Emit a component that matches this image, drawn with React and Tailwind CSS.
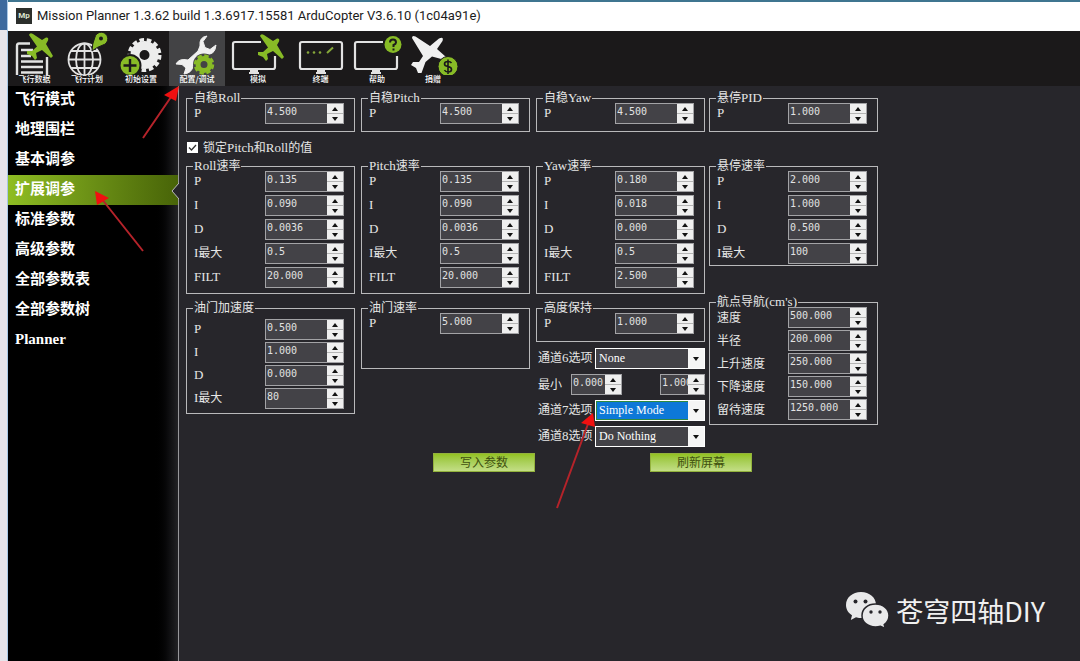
import { useId, useState } from "react";

const green = "#88bb26";

/* Sets Latin runs in a serif face beside the CJK glyphs. */
function Mixed({ children }) {
  return children.split(/([A-Za-z0-9()']+)/).map((part, i) =>
    i % 2 ? (
      <span key={i} className="font-['Liberation_Serif',serif] text-[13px]">{part}</span>
    ) : (
      part
    )
  );
}

function Spinner({ id, label, value, className }) {
  const [text, setText] = useState(value);
  const digits = (value.split(".")[1] || "").length;
  const step = (dir) => setText((t) => (Number(t) + dir / 10 ** digits).toFixed(digits));
  return (
    <div className={`flex h-[21px] shrink-0 border border-[#a3a3a6] bg-[#434247] ${className}`}>
      <input
        id={id}
        aria-label={label}
        type="text"
        inputMode="decimal"
        value={text}
        onChange={(e) => setText(e.target.value)}
        className="min-w-0 flex-1 bg-transparent pb-[3px] pl-px font-['DejaVu_Sans_Mono',monospace] text-[10px] leading-4 text-[#e2e2e2] outline-none"
      />
      <div className="flex w-4 shrink-0 flex-col gap-px bg-[#b4b4b4]">
        <button type="button" aria-label="+" onClick={() => step(1)} className="flex flex-1 items-center justify-center bg-[#efefef]">
          <svg width="6" height="4" viewBox="0 0 6 4"><path d="M3 0L6 4H0z" fill="#111" /></svg>
        </button>
        <button type="button" aria-label="-" onClick={() => step(-1)} className="flex flex-1 items-center justify-center bg-[#efefef]">
          <svg width="6" height="4" viewBox="0 0 6 4"><path d="M3 4L6 0H0z" fill="#111" /></svg>
        </button>
      </div>
    </div>
  );
}

function Field({ label, value }) {
  const id = useId();
  return (
    <div className="flex h-[21px] items-center">
      <label htmlFor={id} className="w-[72px] shrink-0 pb-0.5 pl-px leading-[14px]"><Mixed>{label}</Mixed></label>
      <Spinner id={id} value={value} className="w-[79px]" />
    </div>
  );
}

function Group({ title, rows, className = "", gap = "gap-[3px]" }) {
  return (
    <fieldset className={`border border-[#b9b9bb] pl-1.5 ${className}`}>
      <legend className="h-[9px] px-px leading-[5px] whitespace-nowrap"><Mixed>{title}</Mixed></legend>
      <div className={`flex flex-col ${gap}`}>
        {rows.map(([label, value]) => <Field key={label} label={label} value={value} />)}
      </div>
    </fieldset>
  );
}

function Choice({ label, options, active }) {
  const id = useId();
  return (
    <div className="flex items-center pl-0.5">
      <label htmlFor={id} className="w-[57px] shrink-0 pb-0.5 whitespace-nowrap"><Mixed>{label}</Mixed></label>
      <div className="flex h-[21px] w-[111px] border border-white bg-white">
        <div className={`relative flex w-full border ${active ? "border-[#2f8a3f]" : "border-[#434247]"}`}>
          <select
            id={id}
            className={`w-full appearance-none pb-0.5 pl-0.5 font-['Liberation_Serif',serif] text-[12px] leading-4 text-white outline-none ${active ? "bg-[#0d78d8]" : "bg-[#434247]"}`}
          >
            {options.map((o) => <option key={o}>{o}</option>)}
          </select>
          <span className="pointer-events-none absolute -inset-y-px -right-px flex w-4 items-center justify-center bg-[#f5f5f5]">
            <svg width="6" height="4" viewBox="0 0 6 4"><path d="M3 4L6 0H0z" fill="#111" /></svg>
          </span>
        </div>
      </div>
    </div>
  );
}

const planePath =
  "M29 35Q30 32 33 34L42 40L46 37.500Q49 37 48 40.500L46 44L53 56L51 58L42 50L36 53L37 58L35 60L32 56L27 54V51H32L37 46.500Z";

function Screen({ x, open }) {
  return (
    <g fill="none" stroke="#e2e2e2" strokeWidth="2.2">
      <path
        d={open ? "M30 42H4Q2 42 2 44V67Q2 69 4 69H42Q44 69 44 67V56" : "M4 42H42Q44 42 44 44V67Q44 69 42 69H4Q2 69 2 67V44Q2 42 4 42Z"}
        transform={`translate(${x} 0)`}
      />
      <path d={`M${x + 19} 71H${x + 27}M${x + 18} 73H${x + 28}`} />
    </g>
  );
}

const tools = [
  {
    name: "飞行数据", width: "w-[53px]", box: "8 31 53 44",
    art: (
      <>
        <path d="M30 43.5H19Q17 43.5 17 46V75M47 57V75" fill="none" stroke="#e2e2e2" strokeWidth="2.4" />
        <path d="M21 50H33M21 56H31M21 61.500H43M21 67H43M21 72.500H43" stroke="#e2e2e2" strokeWidth="2.4" />
        <path d={planePath} fill={green} />
      </>
    ),
  },
  {
    name: "飞行计划", width: "w-[52px]", box: "61 31 52 44",
    art: (
      <>
        <g fill="none" stroke="#e2e2e2" strokeWidth="1.8">
          <circle cx="84.500" cy="59.500" r="16" />
          <ellipse cx="84.500" cy="59.500" rx="8.500" ry="16" />
          <path d="M84.500 43.500V76M68 59.500H101M71 51H98M71 68H98" />
        </g>
        <path d="M92 51Q92 44 95 37A6.500 6.500 0 1 1 103 45Q97 47 92 51Z" fill={green} stroke="#1b191a" strokeWidth="1" />
        <circle cx="101" cy="38.500" r="2" fill="#1b191a" />
      </>
    ),
  },
  {
    name: "初始设置", width: "w-14", box: "113 31 56 44",
    art: (
      <>
        <circle cx="144.500" cy="55" r="9.500" fill="none" stroke="#ececec" strokeWidth="9" />
        <circle cx="144.500" cy="55" r="15.200" fill="none" stroke="#ececec" strokeWidth="3.600" strokeDasharray="4.600 2.746" />
        <circle cx="144.500" cy="55" r="4" fill="#1b191a" />
        <circle cx="130" cy="65.500" r="10.500" fill={green} stroke="#1b191a" strokeWidth="2" />
        <path d="M130 59V72M123.500 65.500H136.500" stroke="#1b191a" strokeWidth="2.400" />
      </>
    ),
  },
  {
    name: "配置/调试", width: "w-14", box: "169 31 56 44", current: true,
    art: (
      <>
        <path
          d="M207 36Q199 37 200 46L198 51L188 60Q179 58 176 64L182 64.500L186 68L184 74Q192 73 193 66L205 54Q215 56 216 45L210 49.500L205 47.500L203 41.500Z"
          fill="#f0f0f0" stroke="#f0f0f0" strokeWidth="1"
        />
        <circle cx="204" cy="64.500" r="11" fill="#434345" />
        <circle cx="204" cy="64.500" r="6" fill="none" stroke={green} strokeWidth="5" />
        <circle cx="204" cy="64.500" r="9" fill="none" stroke={green} strokeWidth="2.500" strokeDasharray="4.500 2.569" />
      </>
    ),
  },
  {
    name: "模拟", width: "w-[66px]", box: "225 31 66 44",
    art: (
      <>
        <Screen x={231} open />
        <path d={planePath} transform="translate(231 1)" fill={green} />
      </>
    ),
  },
  {
    name: "终端", width: "w-[59px]", box: "291 31 59 44",
    art: (
      <>
        <Screen x={298} />
        <g fill="#86a83a">
          <circle cx="308" cy="52.500" r="1.300" /><circle cx="314" cy="52.500" r="1.300" /><circle cx="320" cy="52.500" r="1.300" />
        </g>
        <path d="M327 53L333 47.500" stroke="#86a83a" strokeWidth="2" />
      </>
    ),
  },
  {
    name: "帮助", width: "w-[54px]", box: "350 31 54 44",
    art: (
      <>
        <Screen x={353} open />
        <circle cx="393" cy="44.500" r="8.500" fill={green} />
        <path d="M390 42.500Q390 39.500 393 39.500T396 42.500Q396 44 393.500 45V47M393.500 48.500V50.500" fill="none" stroke="#1b191a" strokeWidth="2" />
      </>
    ),
  },
  {
    name: "捐赠", width: "w-[58px]", box: "404 31 58 44",
    art: (
      <>
        <path
          d="M412 38Q412 35 415.500 36.500L430 46L439 38.500Q444 36 442.500 41L437 49L446 57L445 60L432 56.500L425.500 62L421.500 73H418L416 68L411 65L413 62L419 62L423 56Z"
          fill="#f0f0f0"
        />
        <circle cx="448" cy="66.500" r="10" fill={green} stroke="#1b191a" strokeWidth="1" />
        <path d="M451.500 63Q450.500 61.500 448 61.500Q444.500 61.500 444.500 64Q444.500 66 448 66.500T451.500 69.500Q451.500 72 448 72Q445.500 72 444.500 70M448 59.500V74" fill="none" stroke="#1b191a" strokeWidth="1.600" />
      </>
    ),
  },
];

const menu = ["飞行模式", "地理围栏", "基本调参", "扩展调参", "标准参数", "高级参数", "全部参数表", "全部参数树", "Planner"];
const current = "扩展调参";

const action =
  "h-[19px] w-[102px] border border-[#93b23d] bg-linear-to-b from-[#93c21f] to-[#c3de85] pb-0.5 text-[12px] leading-4 text-[#40500f]";

export default function App() {
  return (
    <div className="relative flex min-h-screen overflow-hidden bg-[#27262b] font-['Noto_Sans_CJK_SC',sans-serif] text-[12px] leading-4 text-[#e6e6e6]">
      <div className="flex w-2 shrink-0 flex-col border-r border-[#a9c8e6] bg-[#e7e4ea]">
        <div className="h-[30px] bg-[#3e6a9e]" />
      </div>

      <div className="flex min-w-0 flex-1 flex-col">
        <header className="flex h-[31px] items-center gap-[5px] border-t-2 border-[#3f7590] bg-white pb-0.5 pl-2 font-['Roboto',sans-serif] text-[13px] text-[#1c1c1c]">
          <span className="flex size-4 items-center justify-center bg-[#2c2f2c] text-[8px] font-bold text-[#dfe6d0]">Mp</span>
          <h1 className="whitespace-nowrap">Mission Planner 1.3.62 build 1.3.6917.15581 ArduCopter V3.6.10 (1c04a91e)</h1>
        </header>

        <nav className="flex h-[55px] bg-[#1b191a]">
          {tools.map((t) => (
            <button key={t.name} type="button" className={`flex shrink-0 flex-col items-center ${t.width} ${t.current ? "bg-[#434345]" : ""}`}>
              <svg viewBox={t.box} className="h-11 w-full">{t.art}</svg>
              <span className="-mt-px h-2.5 text-[8px] leading-[10px] font-medium whitespace-nowrap text-white">{t.name}</span>
            </button>
          ))}
        </nav>

        <div className="flex flex-1">
          <aside className="w-[171px] shrink-0 border-r border-[#98989b] bg-linear-to-r from-black from-85% to-[#222225]">
            <ul className="-mt-px">
              {menu.map((m) => (
                <li key={m}>
                  <a
                    href={`#${m}`}
                    className={`relative block h-[30px] pl-[7px] font-['Liberation_Serif','Noto_Sans_CJK_SC',serif] text-[15px] leading-7 font-bold text-white ${
                      m === current ? "bg-linear-to-r from-[#8fbd23] to-[#486408]" : ""
                    }`}
                  >
                    {m}
                    {m === current && (
                      <svg className="absolute top-2 -right-px" width="8" height="16" viewBox="0 0 8 16">
                        <path d="M8 0L1 8L8 16Z" fill="#27262b" />
                        <path d="M8 0L1 8L8 16" fill="none" stroke="#b9b9bb" />
                      </svg>
                    )}
                  </a>
                </li>
              ))}
            </ul>
          </aside>

          <main className="flex-1 pt-2 pl-[7px]">
            <div className="flex items-start">
              <Group title="自稳Roll" rows={[["P", "4.500"]]} className="mr-1.5 h-[38px] w-[169px]" />
              <Group title="自稳Pitch" rows={[["P", "4.500"]]} className="mr-1.5 h-[38px] w-[169px]" />
              <Group title="自稳Yaw" rows={[["P", "4.500"]]} className="mr-1 h-[38px] w-[169px]" />
              <Group title="悬停PID" rows={[["P", "1.000"]]} className="h-[38px] w-[169px]" />
            </div>

            <label className="flex h-[30px] items-center gap-[5px] pl-px">
              <span className="grid size-[11px] place-items-center bg-white">
                <input type="checkbox" defaultChecked className="peer col-start-1 row-start-1 size-[11px] appearance-none" />
                <svg viewBox="0 0 11 11" className="pointer-events-none invisible col-start-1 row-start-1 size-[11px] peer-checked:visible">
                  <path d="M2 5.500L4.500 8L9 3" fill="none" stroke="#333" strokeWidth="1.300" />
                </svg>
              </span>
              <span><Mixed>锁定Pitch和Roll的值</Mixed></span>
            </label>

            <div className="flex items-start">
              <div className="mr-1.5 flex w-[169px] flex-col gap-2.5">
                <Group title="Roll速率" rows={[["P", "0.135"], ["I", "0.090"], ["D", "0.0036"], ["I最大", "0.5"], ["FILT", "20.000"]]} className="h-[132px]" />
                <Group title="油门加速度" rows={[["P", "0.500"], ["I", "1.000"], ["D", "0.000"], ["I最大", "80"]]} gap="gap-0.5 pt-1.5" className="h-[110px]" />
              </div>
              <div className="mr-1.5 flex w-[169px] flex-col gap-2.5">
                <Group title="Pitch速率" rows={[["P", "0.135"], ["I", "0.090"], ["D", "0.0036"], ["I最大", "0.5"], ["FILT", "20.000"]]} className="h-[132px]" />
                <Group title="油门速率" rows={[["P", "5.000"]]} className="h-[65px]" />
              </div>
              <div className="mr-1 flex w-[169px] flex-col gap-2.5">
                <Group title="Yaw速率" rows={[["P", "0.180"], ["I", "0.018"], ["D", "0.000"], ["I最大", "0.5"], ["FILT", "2.500"]]} className="h-[132px]" />
                <Group title="高度保持" rows={[["P", "1.000"]]} className="h-[38px]" />
                <div className="-mt-1 flex flex-col gap-[5px]">
                  <Choice label="通道6选项" options={["None"]} />
                  <div className="flex items-center pl-0.5">
                    <span className="w-[33px] pb-0.5">最小</span>
                    <Spinner label="最小" value="0.000" className="w-[51px]" />
                    <Spinner label="最大" value="1.000" className="ml-auto w-[45px]" />
                  </div>
                  <Choice label="通道7选项" options={["Simple Mode", "Do Nothing"]} active />
                  <Choice label="通道8选项" options={["Do Nothing", "Simple Mode"]} />
                </div>
              </div>
              <div className="flex w-[169px] flex-col gap-8">
                <Group title="悬停速率" rows={[["P", "2.000"], ["I", "1.000"], ["D", "0.500"], ["I最大", "100"]]} className="h-[104px]" />
                <Group title="航点导航(cm's)" rows={[["速度", "500.000"], ["半径", "200.000"], ["上升速度", "250.000"], ["下降速度", "150.000"], ["留待速度", "1250.000"]]} gap="gap-0.5" className="h-[127px]" />
              </div>
            </div>

            <div className="mt-1.5 flex gap-[115px] pl-[247px]">
              <button type="button" className={action}>写入参数</button>
              <button type="button" className={action}>刷新屏幕</button>
            </div>
          </main>
        </div>
      </div>

      <svg className="pointer-events-none absolute top-0 left-0" width="620" height="520" viewBox="0 0 620 520">
        <g stroke="#b5232a" strokeWidth="2">
          <path d="M143 138L171 97M143 251L101 198M557 508L588 424" />
        </g>
        <path d="M179 86L164 95L176 101ZM95 191L109 198L97 205ZM593 413L581 423L595 427Z" fill="#f01010" />
      </svg>

      <div className="absolute right-[35px] bottom-8 flex items-center gap-1.5 text-[27px] leading-9 text-[#f0f0f0]">
        <svg width="44" height="37" viewBox="0 0 44 37">
          <path d="M15 0C6.500 0 0 5.500 0 13C0 17.300 2.300 21 6 23.300L4.800 28L10 25.200C12 25.900 14 26 16 26C25 25.500 30 20 30 13C30 5.500 23.500 0 15 0Z" fill="#e9e9ea" />
          <path d="M29.500 12C21.500 12 16 17 16 23.500S21.500 35 29.500 35C31.300 35 33 34.700 34.500 34.200L39.300 36.500L38.200 32.500C41.300 30.400 43 27.200 43 23.500C43 17 37.300 12 29.500 12Z" fill="#e9e9ea" stroke="#27262b" strokeWidth="1.500" />
          <g fill="#27262b">
            <circle cx="9.500" cy="9.500" r="2" /><circle cx="19.500" cy="9.500" r="2" />
            <circle cx="25" cy="20" r="1.700" /><circle cx="34" cy="20" r="1.700" />
          </g>
        </svg>
        <span className="whitespace-nowrap">苍穹四轴DIY</span>
      </div>
    </div>
  );
}
